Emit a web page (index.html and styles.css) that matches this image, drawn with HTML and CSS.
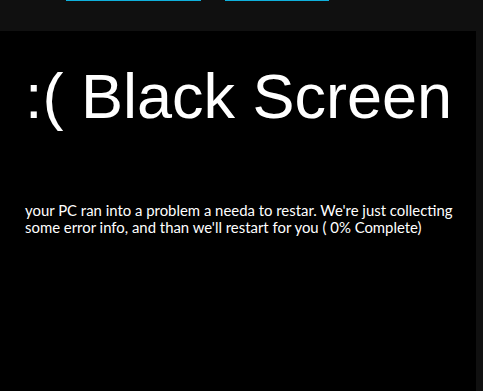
FILE: index.html
```html
<!DOCTYPE html>
<html lang="en">
<head>
    <meta charset="UTF-8">
    <meta name="viewport" content="width=device-width, initial-scale=1.0">
    <title>Black Screen</title>
    <link rel="stylesheet" href="styles.css">
</head>
<body>
    <header class="topbar">
        <nav class="nav">
            <a class="nav-link nav-link-wide" href="#"></a>
            <a class="nav-link" href="#"></a>
        </nav>
    </header>
    <main class="screen">
        <h1 class="title">:( Black Screen</h1>
        <p class="message">your PC ran into a problem a needa to restar. We're just collecting some error info, and than we'll restart for you ( 0% Complete)</p>
    </main>
</body>
</html>
```

FILE: styles.css
```css
html, body {
    height: 100%;
}

body {
    margin: 0;
    background-color: #101010;
    font-family: 'Liberation Sans', Arial, sans-serif;
    display: flex;
    flex-direction: column;
    overflow: hidden;
}

.topbar {
    height: 31px;
    flex-shrink: 0;
}

.nav {
    display: flex;
    padding-left: 66px;
    gap: 24px;
}

.nav-link {
    display: block;
    width: 104px;
    border-top: 1px solid #0fb0dc;
}

.nav-link-wide {
    width: 135px;
}

.screen {
    flex: 1;
    background: #000;
    margin-right: 7px;
    padding: 0 25px;
    color: #fff;
}

.title {
    margin: 29px 0 0;
    font-size: 63px;
    font-weight: normal;
    line-height: 72px;
    white-space: nowrap;
}

.message {
    margin: 70px 0 0;
    width: 440px;
    font-family: Lato, 'Noto Sans', sans-serif;
    font-size: 14.9px;
    line-height: 17px;
}
```
